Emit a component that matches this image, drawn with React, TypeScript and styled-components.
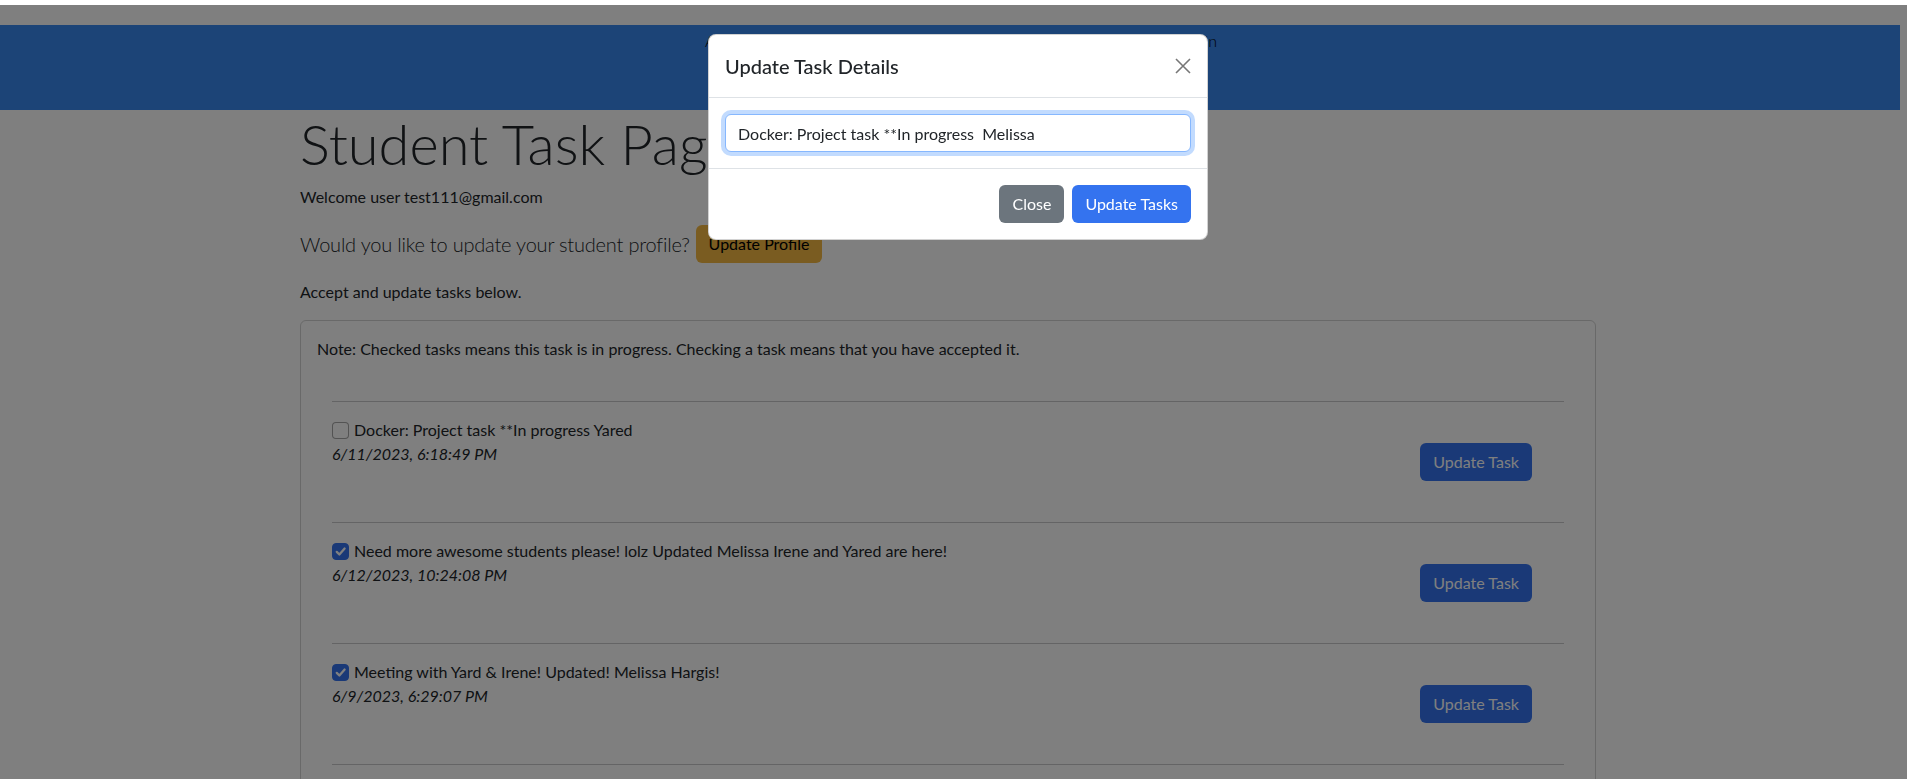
import React from "react";
import styled, { createGlobalStyle } from "styled-components";

const GlobalStyle = createGlobalStyle`
  * { box-sizing: border-box; }
  html, body { margin: 0; padding: 0; background: #fff; }
  body {
    font-family: Lato, "Open Sans", "Liberation Sans", sans-serif;
    font-size: 16px;
    line-height: 1.5;
    color: #212529;
    overflow: hidden;
  }
`;

const TopStrip = styled.div`
  height: 5px;
  background: #fff;
`;

const Page = styled.div`
  padding-top: 20px;
`;

const Navbar = styled.nav`
  height: 85px;
  margin-right: 7px;
  background: #3888ee;
  display: flex;
  justify-content: center;
  padding: 4px 0 0 22px;
`;

const NavList = styled.ul`
  width: 512px;
  margin: 0;
  padding: 0;
  list-style: none;
  display: flex;
  justify-content: space-between;
  align-items: flex-start;
`;

const NavItem = styled.li`
  color: #000;
  font-size: 16px;
  font-weight: 300;
`;

const Main = styled.div`
  padding-right: 11px;
`;

const Container = styled.main`
  max-width: 1296px;
  margin: 0 auto;
`;

const Heading = styled.h1`
  font-size: 56px;
  font-weight: 300;
  line-height: 1.2;
  margin: 0 0 8px;
`;

const Text = styled.p`
  margin: 0 0 16px;
`;

const ProfileRow = styled.div`
  display: flex;
  align-items: center;
  gap: 6px;
  margin-bottom: 17px;
`;

const Lead = styled.span`
  font-size: 20px;
  font-weight: 300;
  line-height: 1.5;
  letter-spacing: -0.2px;
`;

const Button = styled.button<{ $variant: "primary" | "secondary" | "warning" }>`
  font-family: inherit;
  font-size: 16px;
  line-height: 1.5;
  padding: 6px 12px;
  border: 1px solid transparent;
  border-radius: 6px;
  cursor: pointer;
  white-space: nowrap;
  background: ${(p) =>
    p.$variant === "primary" ? "#3473ef" : p.$variant === "secondary" ? "#6c757d" : "#f4b942"};
  color: ${(p) => (p.$variant === "warning" ? "#000" : "#fff")};
`;

const Card = styled.section`
  border: 1px solid rgba(0, 0, 0, 0.175);
  border-radius: 6px;
  padding: 16px;
`;

const Note = styled.p`
  margin: 0;
`;

const TaskList = styled.ul`
  list-style: none;
  margin: 40px 0 24px;
  padding: 0 15px;
`;

const TaskItem = styled.li`
  height: 121px;
  border-top: 1px solid #c8c9ca;
  padding: 16px 32px 0 0;
  display: flex;
  justify-content: space-between;
  align-items: flex-start;

  &:last-child {
    height: 122px;
    border-bottom: 1px solid #c8c9ca;
  }
`;

const TaskInfo = styled.div`
  display: flex;
  flex-direction: column;
`;

const TaskTitle = styled.label`
  display: flex;
  align-items: center;
  gap: 5px;
`;

const CheckBox = styled.span<{ $checked: boolean }>`
  width: 17px;
  height: 17px;
  border-radius: 4px;
  border: 1px solid ${(p) => (p.$checked ? "#3473ef" : "rgba(0,0,0,0.35)")};
  background: ${(p) => (p.$checked ? "#3473ef" : "#fff")};
  display: inline-flex;
  align-items: center;
  justify-content: center;
  flex: none;
`;

const TaskDate = styled.em`
  font-style: italic;
`;

const TaskButton = styled(Button)`
  margin-top: 25px;
`;

const Backdrop = styled.div`
  position: fixed;
  top: 5px;
  left: 0;
  right: 0;
  bottom: 0;
  background: rgba(0, 0, 0, 0.5);
`;

const ModalLayer = styled.div`
  position: fixed;
  top: 5px;
  left: 0;
  right: 0;
  bottom: 0;
  display: flex;
  justify-content: center;
  align-items: flex-start;
  padding: 29px 0 0 9px;
`;

const Dialog = styled.div`
  width: 500px;
  background: #fff;
  border-radius: 8px;
  border: 1px solid rgba(0, 0, 0, 0.175);
`;

const ModalHeader = styled.div`
  display: flex;
  align-items: center;
  justify-content: space-between;
  padding: 16px;
  border-bottom: 1px solid #dee2e6;
`;

const ModalTitle = styled.h5`
  margin: 0;
  font-size: 20px;
  font-weight: 500;
  line-height: 1.5;
`;

const CloseX = styled.button`
  width: 16px;
  height: 16px;
  padding: 0;
  border: 0;
  background: transparent;
  display: flex;
  cursor: pointer;
`;

const ModalBody = styled.div`
  padding: 16px;
`;

const Input = styled.input`
  width: 100%;
  height: 38px;
  padding: 6px 12px;
  font-family: inherit;
  font-size: 16px;
  color: #212529;
  border: 1px solid #86b7fe;
  border-radius: 6px;
  outline: none;
  box-shadow: 0 0 0 4px rgba(13, 110, 253, 0.25);
`;

const ModalFooter = styled.div`
  display: flex;
  justify-content: flex-end;
  gap: 8px;
  padding: 16px;
  border-top: 1px solid #dee2e6;
`;

const tasks = [
  { title: "Docker: Project task **In progress Yared", date: "6/11/2023, 6:18:49 PM", done: false },
  {
    title: "Need more awesome students please! lolz Updated Melissa Irene and Yared are here!",
    date: "6/12/2023, 10:24:08 PM",
    done: true,
  },
  { title: "Meeting with Yard & Irene! Updated! Melissa Hargis!", date: "6/9/2023, 6:29:07 PM", done: true },
];

const Check = () => (
  <svg width="15" height="15" viewBox="0 0 20 20" fill="none">
    <path d="M5 10.5l3.5 3.5 7-8" stroke="#fff" strokeWidth="3" strokeLinecap="round" strokeLinejoin="round" />
  </svg>
);

export default function App() {
  return (
    <>
      <GlobalStyle />
      <TopStrip />
      <Page>
        <Navbar>
          <NavList>
            <NavItem>About</NavItem>
            <NavItem>Home</NavItem>
            <NavItem>Students</NavItem>
            <NavItem>Tasks</NavItem>
            <NavItem>Profile</NavItem>
            <NavItem>Admin Login</NavItem>
          </NavList>
        </Navbar>
        <Main>
          <Container>
            <Heading>Student Task Page</Heading>
            <Text>Welcome user test111@gmail.com</Text>
            <ProfileRow>
              <Lead>Would you like to update your student profile?</Lead>
              <Button $variant="warning">Update Profile</Button>
            </ProfileRow>
            <Text>Accept and update tasks below.</Text>
            <Card>
              <Note>
                Note: Checked tasks means this task is in progress. Checking a task means that you have accepted it.
              </Note>
              <TaskList>
                {tasks.map((t) => (
                  <TaskItem key={t.title}>
                    <TaskInfo>
                      <TaskTitle>
                        <CheckBox $checked={t.done}>{t.done && <Check />}</CheckBox>
                        {t.title}
                      </TaskTitle>
                      <TaskDate>{t.date}</TaskDate>
                    </TaskInfo>
                    <TaskButton $variant="primary">Update Task</TaskButton>
                  </TaskItem>
                ))}
              </TaskList>
            </Card>
          </Container>
        </Main>
      </Page>
      <Backdrop />
      <ModalLayer>
        <Dialog>
          <ModalHeader>
            <ModalTitle>Update Task Details</ModalTitle>
            <CloseX aria-label="Close">
              <svg width="16" height="16" viewBox="0 0 16 16">
                <path d="M1 1L15 15M15 1L1 15" stroke="#777" strokeWidth="1.6" />
              </svg>
            </CloseX>
          </ModalHeader>
          <ModalBody>
            <Input readOnly value="Docker: Project task **In progress  Melissa" />
          </ModalBody>
          <ModalFooter>
            <Button $variant="secondary">Close</Button>
            <Button $variant="primary">Update Tasks</Button>
          </ModalFooter>
        </Dialog>
      </ModalLayer>
    </>
  );
}
